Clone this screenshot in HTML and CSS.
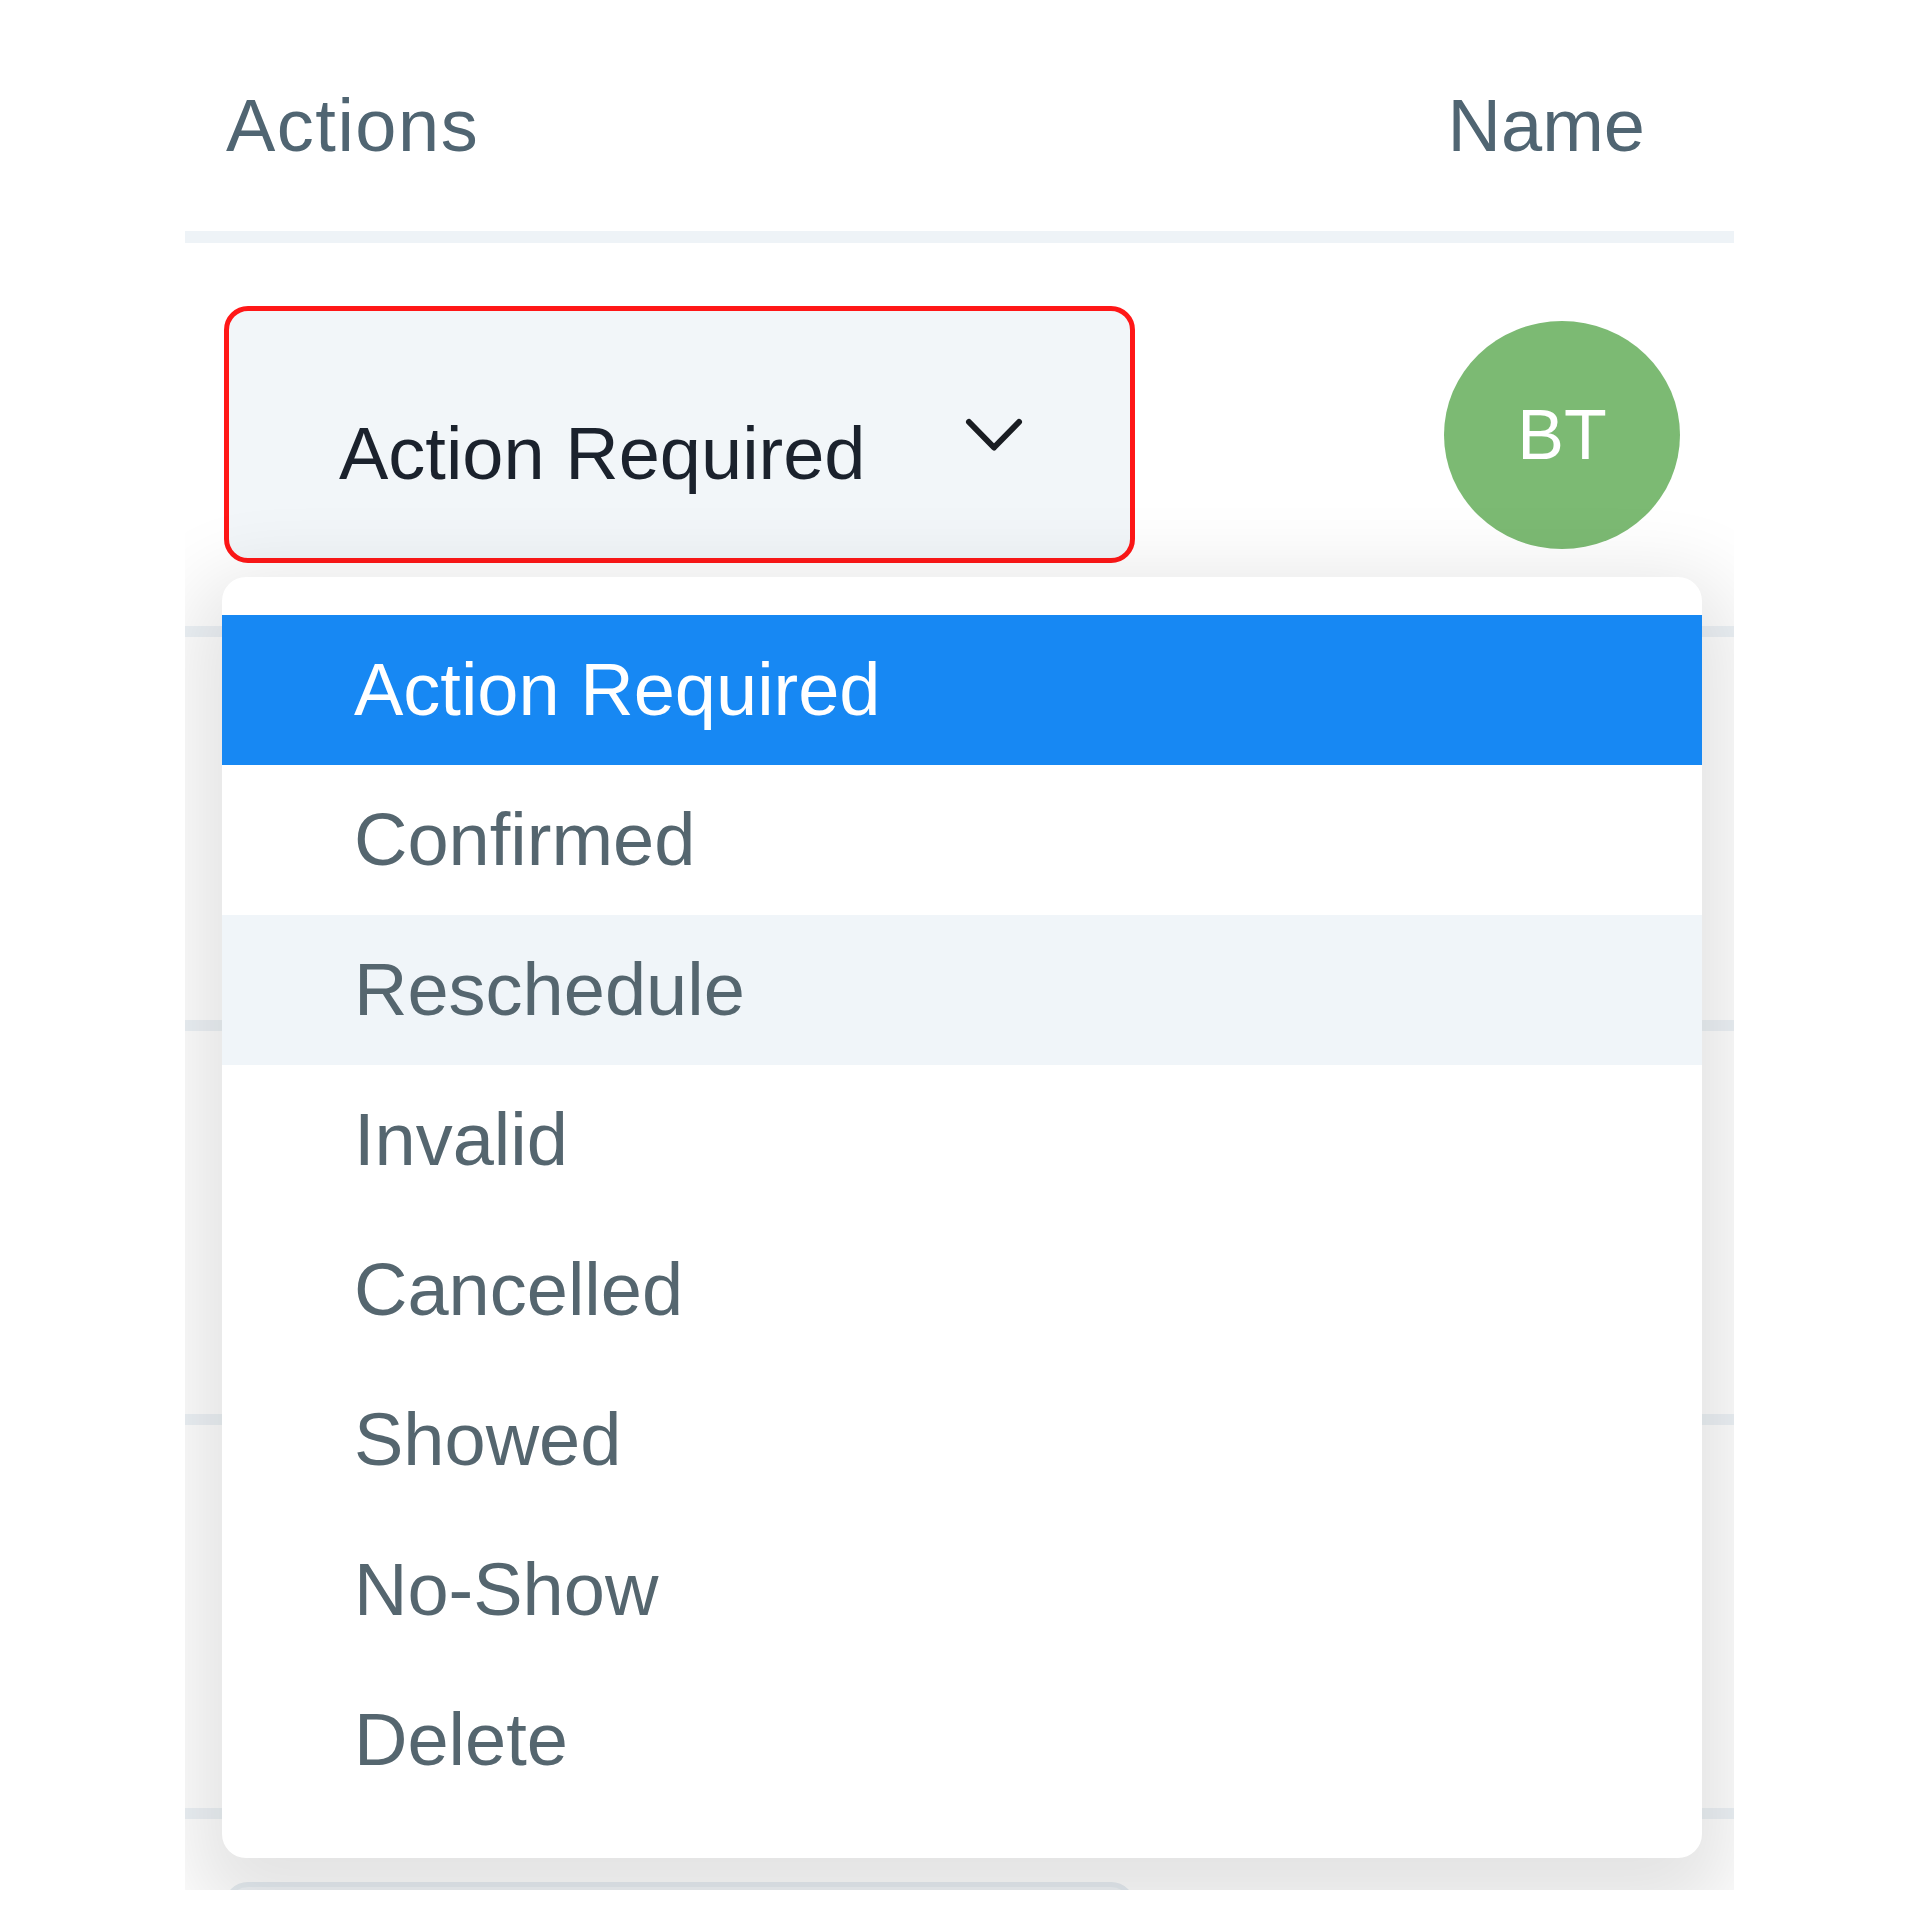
FILE: index.html
```html
<!DOCTYPE html>
<html lang="en">
<head>
<meta charset="utf-8">
<title>Appointment status</title>
<link rel="stylesheet" href="styles.css">
</head>
<body>
<div class="table">
  <div class="thead">
    <div class="th th--actions">Actions</div>
    <div class="th">Name</div>
  </div>
  <div class="row">
    <div class="cell-actions">
      <div class="select select--open">
        <span class="select-label">Action Required</span>
        <svg class="chev" width="60" height="36" viewBox="0 0 60 36" aria-hidden="true">
          <polyline points="5,5 30,30.5 55,5" fill="none" stroke="#1a1d22" stroke-width="6" stroke-linecap="round" stroke-linejoin="round"/>
        </svg>
      </div>
      <ul class="menu">
        <li class="menu-item is-selected">Action Required</li>
        <li class="menu-item">Confirmed</li>
        <li class="menu-item is-hover">Reschedule</li>
        <li class="menu-item">Invalid</li>
        <li class="menu-item">Cancelled</li>
        <li class="menu-item">Showed</li>
        <li class="menu-item">No-Show</li>
        <li class="menu-item">Delete</li>
      </ul>
    </div>
    <div class="avatar">BT</div>
  </div>
  <div class="row"><div class="cell-actions"><div class="select"></div></div></div>
  <div class="row"><div class="cell-actions"><div class="select"></div></div></div>
  <div class="row"><div class="cell-actions"><div class="select"></div></div></div>
  <div class="row"><div class="cell-actions"><div class="select"></div></div></div>
</div>
</body>
</html>
```

FILE: styles.css
```css
html, body {
  margin: 0;
  padding: 0;
  background: #ffffff;
}

body {
  font-family: "Liberation Sans", Arial, sans-serif;
}

.table {
  margin-left: 185px;
  width: 1549px;
  height: 1890px;
  overflow: hidden;
  box-sizing: border-box;
}

.thead {
  height: 243px;
  box-sizing: border-box;
  padding: 88px 89px 0 41px;
  border-bottom: 12px solid #eef3f7;
  display: flex;
  justify-content: space-between;
  align-items: flex-start;
}

.th {
  font-size: 74px;
  line-height: 75px;
  color: #506572;
}

.th--actions {
  letter-spacing: 1.5px;
}

.row {
  height: 394px;
  box-sizing: border-box;
  border-bottom: 11px solid #eef3f7;
  padding: 0 54px 0 39px;
  display: flex;
  align-items: center;
  justify-content: space-between;
}

.cell-actions {
  position: relative;
}

.select {
  width: 911px;
  height: 257px;
  box-sizing: border-box;
  border: 5px solid #e8eef3;
  border-radius: 24px;
  background: #f2f6f9;
  display: flex;
  align-items: center;
  padding: 0 106px 0 110px;
}

.select--open {
  border-color: #ff1717;
}

.select-label {
  font-size: 74px;
  line-height: 85px;
  margin-top: 38px;
  color: #1b222d;
  white-space: nowrap;
}

.chev {
  margin-left: auto;
  display: block;
}

.menu {
  position: absolute;
  z-index: 10;
  top: 271px;
  left: -2px;
  width: 1480px;
  margin: 0;
  padding: 38px 0 43px;
  list-style: none;
  background: #ffffff;
  border-radius: 24px;
  box-shadow: 0 30px 80px 30px rgba(0, 0, 0, 0.11);
}

.menu-item {
  height: 150px;
  line-height: 150px;
  padding-left: 132px;
  font-size: 74px;
  color: #55666f;
  white-space: nowrap;
}

.menu-item.is-selected {
  background: #1788f3;
  color: #ffffff;
}

.menu-item.is-hover {
  background: #f0f5f9;
}

.avatar {
  width: 236px;
  height: 228px;
  border-radius: 50%;
  background: #7cba73;
  color: #ffffff;
  font-size: 70px;
  display: flex;
  align-items: center;
  justify-content: center;
  flex-shrink: 0;
}
```
